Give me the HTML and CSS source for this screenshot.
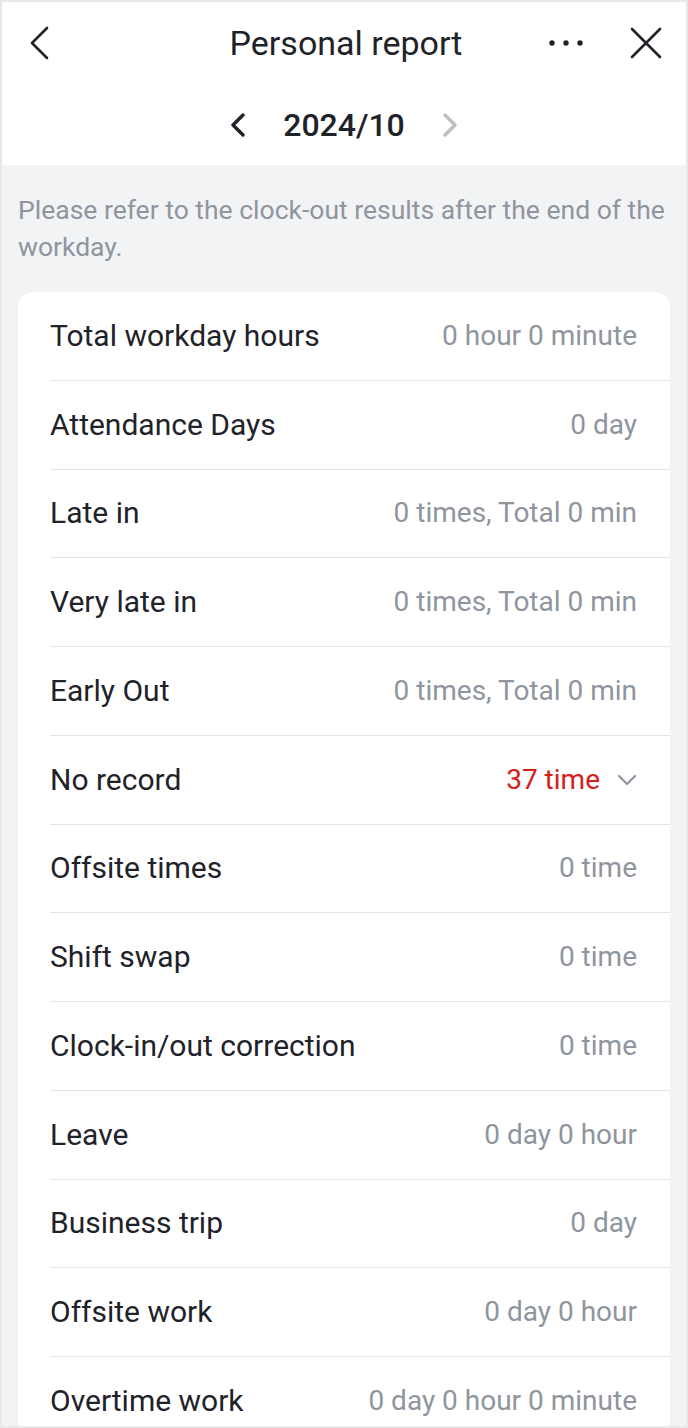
FILE: index.html
```html
<!DOCTYPE html>
<html lang="en">
<head>
<meta charset="utf-8">
<title>Personal report</title>
<link rel="stylesheet" href="styles.css">
</head>
<body>
<div class="frame">
  <header class="header">
    <div class="topbar">
      <button class="icon-btn back" aria-label="Back">
        <svg width="20" height="34" viewBox="0 0 20 34"><path d="M17 2 L2 17 L17 32" fill="none" stroke="#1f2329" stroke-width="2.6" stroke-linecap="round" stroke-linejoin="round"/></svg>
      </button>
      <h1 class="title">Personal report</h1>
      <div class="actions">
        <button class="icon-btn more" aria-label="More">
          <svg width="36" height="8" viewBox="0 0 36 8"><circle cx="4" cy="4" r="2.7" fill="#1f2329"/><circle cx="18" cy="4" r="2.7" fill="#1f2329"/><circle cx="32" cy="4" r="2.7" fill="#1f2329"/></svg>
        </button>
        <button class="icon-btn close" aria-label="Close">
          <svg width="32" height="32" viewBox="0 0 32 32"><path d="M2 2 L30 30 M30 2 L2 30" fill="none" stroke="#1f2329" stroke-width="2.6" stroke-linecap="round"/></svg>
        </button>
      </div>
    </div>
    <div class="monthbar">
      <button class="icon-btn month-prev" aria-label="Previous month">
        <svg width="16" height="24" viewBox="0 0 16 24"><path d="M13 2 L3 12 L13 22" fill="none" stroke="#1f2329" stroke-width="3.4" stroke-linecap="round" stroke-linejoin="round"/></svg>
      </button>
      <span class="month">2024/10</span>
      <button class="icon-btn month-next" aria-label="Next month">
        <svg width="16" height="24" viewBox="0 0 16 24"><path d="M3 2 L13 12 L3 22" fill="none" stroke="#bbbfc4" stroke-width="3.4" stroke-linecap="round" stroke-linejoin="round"/></svg>
      </button>
    </div>
  </header>

  <p class="note">Please refer to the clock-out results after the end of the workday.</p>

  <section class="card">
    <div class="row"><span class="label">Total workday hours</span><span class="value">0 hour 0 minute</span></div>
    <div class="row"><span class="label">Attendance Days</span><span class="value">0 day</span></div>
    <div class="row"><span class="label">Late in</span><span class="value">0 times, Total 0 min</span></div>
    <div class="row"><span class="label">Very late in</span><span class="value">0 times, Total 0 min</span></div>
    <div class="row"><span class="label">Early Out</span><span class="value">0 times, Total 0 min</span></div>
    <div class="row"><span class="label">No record</span><span class="value alert">37 time<svg class="chev" width="20" height="12" viewBox="0 0 20 12"><path d="M2 2 L10 10 L18 2" fill="none" stroke="#8f959e" stroke-width="2.2" stroke-linecap="round" stroke-linejoin="round"/></svg></span></div>
    <div class="row"><span class="label">Offsite times</span><span class="value">0 time</span></div>
    <div class="row"><span class="label">Shift swap</span><span class="value">0 time</span></div>
    <div class="row"><span class="label">Clock-in/out correction</span><span class="value">0 time</span></div>
    <div class="row"><span class="label">Leave</span><span class="value">0 day 0 hour</span></div>
    <div class="row"><span class="label">Business trip</span><span class="value">0 day</span></div>
    <div class="row"><span class="label">Offsite work</span><span class="value">0 day 0 hour</span></div>
    <div class="row last"><span class="label">Overtime work</span><span class="value">0 day 0 hour 0 minute</span></div>
  </section>
</div>
</body>
</html>
```

FILE: styles.css
```css
* {
  box-sizing: border-box;
}

html, body {
  margin: 0;
  padding: 0;
}

body {
  font-family: Roboto, "Noto Sans", "Liberation Sans", sans-serif;
  color: #1f2329;
  background: #ffffff;
}

.frame {
  width: 688px;
  height: 1428px;
  border: 2px solid #e7e8ea;
  background: #f2f3f5;
  overflow: hidden;
}

.icon-btn {
  border: 0;
  padding: 0;
  background: none;
  display: flex;
  align-items: center;
  justify-content: center;
}

/* Header */
.header {
  background: #ffffff;
}

.topbar {
  height: 82px;
  display: grid;
  grid-template-columns: 1fr auto 1fr;
  align-items: center;
  padding: 0 24px 0 28px;
}

.back {
  justify-self: start;
}

.title {
  margin: 0;
  font-size: 34px;
  font-weight: 400;
  line-height: 40px;
}

.actions {
  justify-self: end;
  display: flex;
  align-items: center;
  gap: 46px;
}

.monthbar {
  height: 81px;
  display: flex;
  align-items: center;
  justify-content: center;
  gap: 37px;
}

.month {
  font-size: 32px;
  font-weight: 500;
  line-height: 40px;
}

/* Hint */
.note {
  margin: 0;
  padding: 26px 16px 27px;
  font-size: 26.5px;
  line-height: 37px;
  color: #8f959e;
}

/* Stats card */
.card {
  margin: 0 16px;
  background: #ffffff;
  border-radius: 16px;
  padding-left: 32px;
}

.row {
  height: 88.75px;
  display: flex;
  align-items: center;
  justify-content: space-between;
  padding-right: 33px;
  border-bottom: 1px solid #e2e4e7;
  line-height: 36px;
}

.row.last {
  border-bottom: 0;
}

.label {
  font-size: 30px;
  color: #1f2329;
}

.value {
  font-size: 28px;
  color: #8f959e;
  display: flex;
  align-items: center;
}

.value.alert {
  color: #d4201b;
}

.chev {
  margin-left: 17px;
}
```
